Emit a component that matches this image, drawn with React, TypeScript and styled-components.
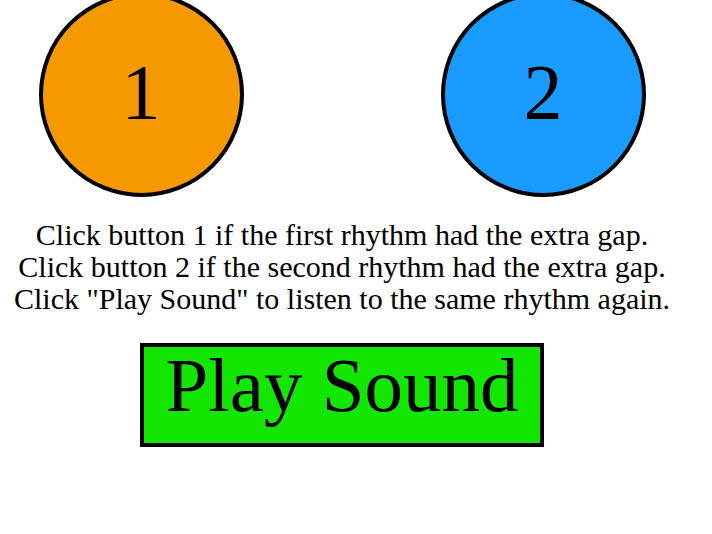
import React from 'react';
import styled, { createGlobalStyle } from 'styled-components';

const GlobalStyle = createGlobalStyle`
  html, body {
    margin: 0;
    padding: 0;
    background: #ffffff;
    overflow: hidden;
  }
  body {
    font-family: "Liberation Serif", "Times New Roman", serif;
    color: #000000;
  }
`;

const Root = styled.div`
  width: 684px;
  display: flex;
  flex-direction: column;
  align-items: center;
  margin-top: -8px;
`;

const CircleRow = styled.div`
  display: flex;
  justify-content: center;
  gap: 197px;
`;

const Circle = styled.button<{ $color: string }>`
  width: 205px;
  height: 205px;
  box-sizing: border-box;
  border-radius: 50%;
  border: 4px solid #000000;
  background-color: ${(p) => p.$color};
  display: flex;
  align-items: center;
  justify-content: center;
  padding: 0 0 6px 0;
  font-family: "Liberation Serif", "Times New Roman", serif;
  font-size: 78px;
  line-height: 1;
  color: #000000;
  cursor: pointer;
`;

const Instructions = styled.div`
  margin-top: 22px;
  font-size: 30px;
  line-height: 32px;
  text-align: center;
  white-space: nowrap;
`;

const PlayButton = styled.button`
  margin-top: 28px;
  width: 404px;
  height: 104px;
  box-sizing: border-box;
  border: 4px solid #000000;
  background-color: #13e600;
  display: flex;
  align-items: center;
  justify-content: center;
  padding: 0 0 20px 0;
  font-family: "Liberation Serif", "Times New Roman", serif;
  font-size: 77px;
  line-height: 1;
  color: #000000;
  cursor: pointer;
`;

const App: React.FC = () => {
  return (
    <Root>
      <GlobalStyle />
      <CircleRow>
        <Circle $color="#f59900">1</Circle>
        <Circle $color="#1a9bff">2</Circle>
      </CircleRow>

      <Instructions>
        Click button 1 if the first rhythm had the extra gap.
        <br />
        Click button 2 if the second rhythm had the extra gap.
        <br />
        Click "Play Sound" to listen to the same rhythm again.
      </Instructions>

      <PlayButton>Play Sound</PlayButton>
    </Root>
  );
};

export default App;
